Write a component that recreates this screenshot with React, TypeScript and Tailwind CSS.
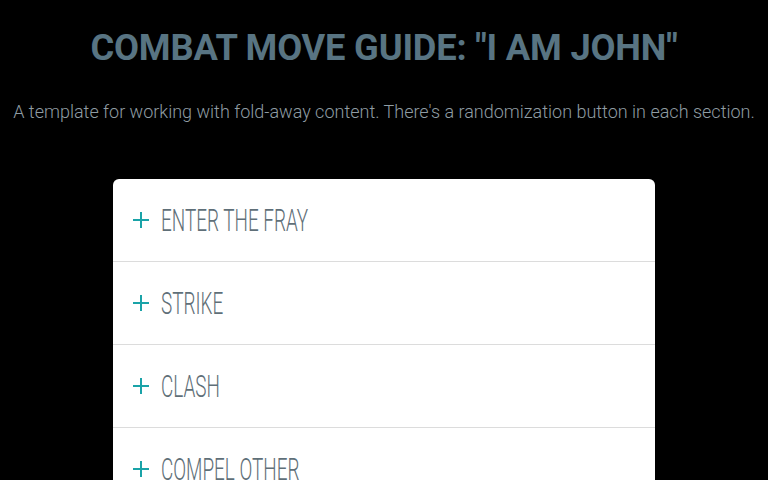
import React, { useState } from 'react';

const moves = ['Enter the Fray', 'Strike', 'Clash', 'Compel Other', 'Gather Intel', 'Aid an Ally'];

const PlusIcon: React.FC<{ open: boolean }> = ({ open }) => (
  <svg width="16" height="16" viewBox="0 0 16 16" className="shrink-0 text-[#1aa3a8]">
    <path d="M0 8h16" stroke="currentColor" strokeWidth="2" />
    {!open && <path d="M8 0v16" stroke="currentColor" strokeWidth="2" />}
  </svg>
);

const App: React.FC = () => {
  const [open, setOpen] = useState<number | null>(null);

  return (
    <div className="min-h-screen bg-black pt-[26px] pb-10" style={{ fontFamily: 'Roboto, "Liberation Sans", sans-serif' }}>
      <h1 className="text-center text-[36.3px] font-bold leading-[44px] text-[#587482] tracking-[-0.2px]">
        COMBAT MOVE GUIDE: "I AM JOHN"
      </h1>
      <p className="mt-[29px] text-center text-[18px] font-light leading-[26px] text-[#8f9ca3]">
        A template for working with fold-away content. There's a randomization button in each section.
      </p>

      <div className="mx-auto mt-[54px] w-[542px] overflow-hidden rounded-md bg-white">
        {moves.map((move, i) => (
          <div key={move} className={i > 0 ? 'border-t border-[#dcdcdc]' : ''}>
            <button
              onClick={() => setOpen(open === i ? null : i)}
              className="flex h-[82px] w-full items-center gap-[12px] pl-[20px] text-left"
            >
              <PlusIcon open={open === i} />
              <span className="origin-left scale-x-[0.61] whitespace-nowrap text-[31px] font-light uppercase leading-none text-[#5f6f78]">
                {move}
              </span>
            </button>
          </div>
        ))}
      </div>
    </div>
  );
};

export default App;
